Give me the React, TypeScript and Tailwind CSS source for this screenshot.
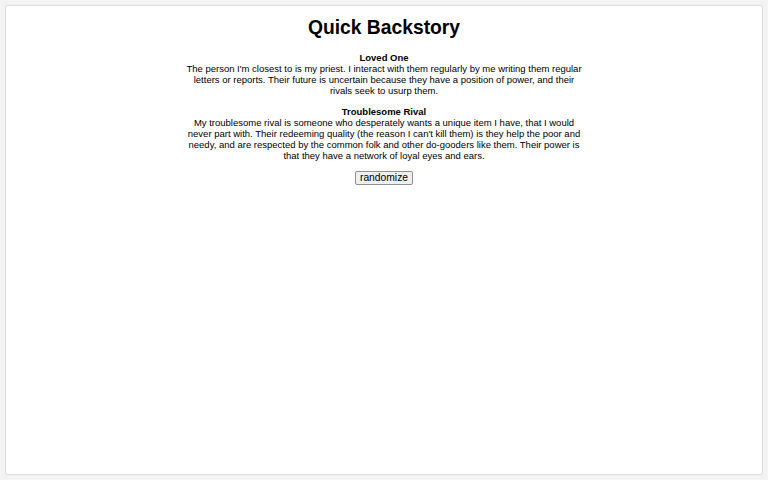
export default function App() {
  return (
    <div className="h-[480px] w-[768px] bg-[#f3f3f3] p-[5px] font-['Liberation_Sans',Arial,sans-serif] text-black">
      <div className="flex h-full flex-col items-center rounded-[2px] border border-[#dcdcdc] bg-white">
        <h1 className="mt-[10px] text-[19.3px] font-bold leading-[24px]">Quick Backstory</h1>
        <div className="mt-[12px] w-[400px] text-center text-[9.5px] leading-[11px]">
          <div className="font-bold">Loved One</div>
          <p>
            The person I'm closest to is my priest. I interact with them regularly by me writing them regular
            letters or reports. Their future is uncertain because they have a position of power, and their rivals
            seek to usurp them.
          </p>
          <div className="mt-[10px] font-bold">Troublesome Rival</div>
          <p>
            My troublesome rival is someone who desperately wants a unique item I have, that I would never part
            with. Their redeeming quality (the reason I can't kill them) is they help the poor and needy, and are
            respected by the common folk and other do-gooders like them. Their power is that they have a network of
            loyal eyes and ears.
          </p>
          <button className="mt-[10px] rounded-[2px] border border-[#8f8f8f] bg-[#efefef] px-[4px] text-[10.3px] leading-[12px]">
            randomize
          </button>
        </div>
      </div>
    </div>
  );
}
